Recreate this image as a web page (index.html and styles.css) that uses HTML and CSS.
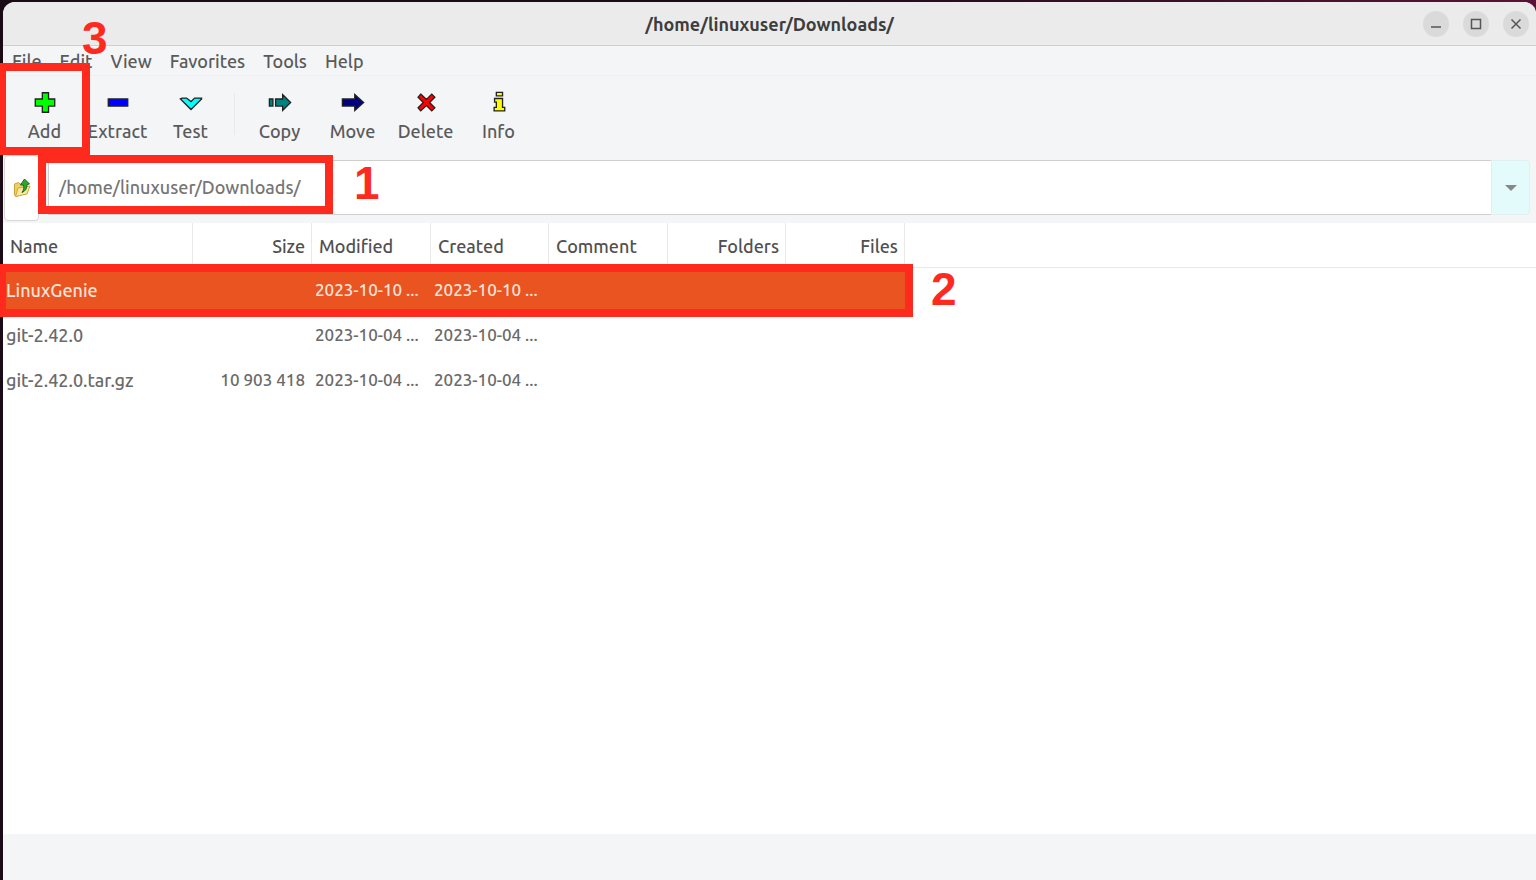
FILE: index.html
```html
<!DOCTYPE html>
<html lang="en">
<head>
  <meta charset="UTF-8" />
  <title>/home/linuxuser/Downloads/</title>
  <link rel="stylesheet" href="styles.css">
</head>
<body>

  <div class="window">
    <header class="titlebar">
      <h1>/home/linuxuser/Downloads/</h1>
      <div class="window-buttons">
        <button aria-label="Minimize"><svg viewBox="0 0 26 26"><path d="M8 16h10" /></svg></button>
        <button aria-label="Maximize"><svg viewBox="0 0 26 26"><path d="M8.5 8.5h9v9h-9z" /></svg></button>
        <button aria-label="Close"><svg viewBox="0 0 26 26"><path d="M8.5 8.5l9 9M17.5 8.5l-9 9" /></svg></button>
      </div>
    </header>

    <nav class="menubar">
      <button>File</button>
      <button>Edit</button>
      <button>View</button>
      <button>Favorites</button>
      <button>Tools</button>
      <button>Help</button>
    </nav>

    <div class="toolbar">
      <button class="tool">
        <svg viewBox="0 0 30 26"><path fill="#00ff00" d="M12 2h7v7h7v8h-7v7h-7v-7H4V9h8z" /></svg>
        Add
        <span class="mark mark-add"></span>
        <span class="number number-add">3</span>
      </button>
      <button class="tool">
        <svg viewBox="0 0 30 26"><path fill="#0000ff" d="M4 9h22v8H4z" /></svg>
        Extract
      </button>
      <button class="tool">
        <svg viewBox="0 0 30 26"><path fill="#00ffff" d="M3 9l2-1h5l5 4 4-4h8v1L15 21z" /></svg>
        Test
      </button>
      <span class="separator"></span>
      <button class="tool">
        <svg viewBox="0 0 30 26"><path fill="#008080" d="M3 9h4v8H3zM10 9h8V4l9 9-9 9v-5h-8z" /></svg>
        Copy
      </button>
      <button class="tool">
        <svg viewBox="0 0 30 26"><path fill="#000080" d="M3 9h14V4l10 9-10 9v-5H3z" /></svg>
        Move
      </button>
      <button class="tool">
        <svg viewBox="0 0 30 26"><path fill="#ff0000" d="M9 3.500l6.500 6 6-6 3.500 3.500-6 6 6 6-3.500 3.500-6-6-6.500 6-3-3.500 6-6-6-6z" /></svg>
        Delete
      </button>
      <button class="tool">
        <svg viewBox="0 0 30 26"><path fill="#ffff00" d="M12 1.500h7v4h-7zM10 8.500h9v10h2.500v4H9.500v-4H12v-6h-2z" /></svg>
        Info
      </button>
    </div>

    <div class="location">
      <button class="up" aria-label="Up">
        <svg viewBox="0 0 18 20">
          <path fill="#f0cf62" stroke="#c9a33a" d="M1.500 6l4-1.500 1.500 1.500 6-1v10L3 18.500 1.500 17z" />
          <path fill="#fbe8a0" stroke="#d0a73c" d="M2.500 18.500L5 10l12-2-3 8z" />
          <path fill="#2fa52f" stroke="#1c6b1e" d="M11.500 1l5 5-2.500.5c0 4-1.500 6.500-5 8 2-3 2-5 1.500-7.500L7.500 7z" />
        </svg>
      </button>
      <div class="combo">
        <input type="text" class="path" aria-label="Path" value="/home/linuxuser/Downloads/" />
        <button class="drop" aria-label="History"><svg viewBox="0 0 12 6"><path d="M0 0h12L6 6z" /></svg></button>
        <span class="mark mark-path"></span>
        <span class="number number-path">1</span>
      </div>
    </div>

    <main class="files">
      <table>
        <colgroup>
          <col class="col-name" />
          <col class="col-data" />
          <col class="col-data" />
          <col class="col-count" />
          <col class="col-data" />
          <col class="col-count" />
          <col class="col-data" />
          <col />
        </colgroup>
        <thead>
          <tr>
            <th>Name</th>
            <th class="right">Size</th>
            <th>Modified</th>
            <th>Created</th>
            <th>Comment</th>
            <th class="right">Folders</th>
            <th class="right">Files</th>
            <td></td>
          </tr>
        </thead>
        <tbody>
          <tr class="selected">
            <td>LinuxGenie</td><td></td><td class="date">2023-10-10 ...</td><td class="date">2023-10-10 ...</td><td></td><td></td><td></td>
          </tr>
          <tr>
            <td>git-2.42.0</td><td></td><td class="date">2023-10-04 ...</td><td class="date">2023-10-04 ...</td><td></td><td></td><td></td>
          </tr>
          <tr>
            <td>git-2.42.0.tar.gz</td><td class="size">10 903 418</td><td class="date">2023-10-04 ...</td><td class="date">2023-10-04 ...</td><td></td><td></td><td></td>
          </tr>
        </tbody>
      </table>
      <span class="mark mark-row"></span>
      <span class="number number-row">2</span>
    </main>

    <footer class="statusbar"></footer>
  </div>

</body>
</html>
```
FILE: styles.css
```css
* {
  box-sizing: border-box;
}
body {
  margin: 0;
  padding: 2px 0 0 3px;
  min-height: 100vh;
  display: flex;
  background: linear-gradient(90deg, #1a0b16 50%, #5a1336);
  font-family: Ubuntu, "Noto Sans", sans-serif;
  font-size: 18px;
  font-weight: 500;
  line-height: 24px;
  color: #6a6a6a;
  overflow: hidden;
}
button {
  margin: 0;
  padding: 0;
  border: none;
  background: none;
  font: inherit;
  color: #5a5a5a;
}
.window {
  flex: 1;
  display: flex;
  flex-direction: column;
  background: #f4f5f7;
  border-radius: 12px 12px 0 0;
}
.titlebar {
  position: relative;
  display: flex;
  align-items: center;
  justify-content: center;
  height: 44px;
  background: #ebebeb;
  border-bottom: 1px solid #cfcfcf;
  border-radius: 12px 12px 0 0;
}
.titlebar h1 {
  margin: 0;
  font-size: 18px;
  color: #3d3d3d;
}
.window-buttons {
  position: absolute;
  right: 7px;
  display: flex;
  gap: 14px;
}
.window-buttons button {
  width: 26px;
  height: 26px;
  border-radius: 50%;
  background: #dadada;
}
.window-buttons svg {
  display: block;
  fill: none;
  stroke: #555;
  stroke-width: 1.5;
}
.menubar {
  display: flex;
  gap: 18px;
  height: 30px;
  padding: 3px 9px;
  border-bottom: 1px solid #eeeff1;
}
.toolbar {
  display: flex;
  height: 78px;
  padding: 15px 5px 11px;
}
.tool {
  position: relative;
  display: flex;
  flex-direction: column;
  align-items: center;
  gap: 5px;
  width: 73px;
}
.tool svg {
  width: 30px;
  height: 26px;
  stroke: #222;
  stroke-width: 1.5;
}
.separator {
  width: 1px;
  height: 42px;
  margin: 2px 8px 0 7px;
  background: #e8e9eb;
}
.location {
  display: flex;
  align-items: center;
  height: 67px;
  padding: 0 6px 0 1px;
}
.up {
  display: flex;
  align-items: center;
  justify-content: center;
  width: 35px;
  height: 66px;
  background: #fff;
  border: 1px solid #d8d8da;
  border-radius: 4px;
}
.up svg {
  width: 18px;
  height: 20px;
}
.combo {
  position: relative;
  flex: 1;
  display: flex;
  height: 55px;
  margin-left: 9px;
}
.path {
  flex: 1;
  min-width: 0;
  padding: 0 10px 2px;
  background: #fff;
  border: 1px solid #cfcfcf;
  border-right: none;
  border-radius: 0;
  font: inherit;
  color: #757575;
}
.drop {
  display: flex;
  align-items: center;
  justify-content: center;
  width: 39px;
  background: #e4fbfb;
  border: 1px solid #e3eeee;
  border-radius: 0 4px 4px 0;
}
.drop svg {
  width: 12px;
  height: 6px;
  fill: #888;
}
.files {
  position: relative;
  flex: 1;
  margin-top: 2px;
  background: #fff;
}
table {
  width: 100%;
  table-layout: fixed;
  border-collapse: separate;
  border-spacing: 0;
}
.col-name {
  width: 190px;
}
.col-data {
  width: 119px;
}
.col-count {
  width: 118px;
}
th {
  height: 45px;
  padding: 2px 6px 0 7px;
  border-right: 1px solid #e9e9e9;
  font-weight: 500;
  text-align: left;
  color: #505050;
}
thead th,
thead td {
  border-bottom: 1px solid #e9e9e9;
}
tbody td {
  height: 45px;
  padding: 0 7px 2px 3px;
  white-space: nowrap;
}
.right {
  text-align: right;
}
.date,
.size {
  font-size: 17px;
}
.size {
  text-align: right;
}
.selected td {
  background: #e95420;
  color: #fbe3da;
}
.statusbar {
  height: 46px;
}

/* red frames and step numbers */
.mark {
  position: absolute;
  z-index: 1;
  border: 8px solid #ff2a1e;
  pointer-events: none;
}
.mark-add {
  top: -28px;
  left: -10px;
  width: 92px;
  height: 92px;
}
.mark-path {
  top: -5px;
  left: -10px;
  width: 295px;
  height: 59px;
}
.mark-row {
  top: 41px;
  left: -5px;
  width: 915px;
  height: 53px;
}
.number {
  position: absolute;
  z-index: 2;
  font: bold 46px/46px "Liberation Sans", Arial, sans-serif;
  color: #ff2a1e;
}
.number-add {
  top: -76px;
  left: 74px;
}
.number-path {
  top: 0;
  left: 306px;
}
.number-row {
  top: 43px;
  left: 928px;
}
```
